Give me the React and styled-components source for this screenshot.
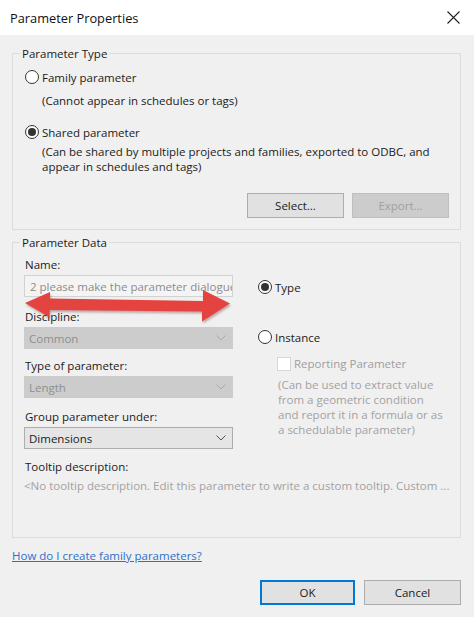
import React from "react";
import styled, { createGlobalStyle } from "styled-components";

const GlobalStyle = createGlobalStyle`
  html, body {
    margin: 0;
    padding: 0;
    background: #f0f0f0;
  }
  body {
    font-family: "Open Sans", "Noto Sans", sans-serif;
    font-size: 11.5px;
    color: #1b1b1b;
  }
  * { box-sizing: border-box; }
`;

const Window = styled.div`
  position: relative;
  width: 474px;
  height: 617px;
  background: #f0f0f0;
  display: flex;
  flex-direction: column;
  overflow: hidden;
`;

const TitleBar = styled.div`
  height: 35px;
  background: #ffffff;
  display: flex;
  align-items: center;
  justify-content: space-between;
  padding: 0 14px 0 10px;
`;

const Title = styled.div`
  font-size: 12.8px;
  color: #111;
`;

const Content = styled.div`
  display: flex;
  flex-direction: column;
  padding: 0 13px 0 12px;
`;

const GroupBox = styled.fieldset`
  margin: ${(p) => p.$mt}px 0 0 0;
  padding: 0;
  border: 1px solid #dcdcdc;
  min-width: 0;
`;

const Legend = styled.legend`
  margin-left: 7px;
  padding: 0 2px;
  line-height: 15px;
  color: #1b1b1b;
`;

const GroupInner = styled.div`
  display: flex;
  flex-direction: column;
  padding: 0 11px ${(p) => p.$pb}px 12px;
`;

const RadioRow = styled.div`
  display: flex;
  align-items: center;
  gap: 3px;
  height: 16px;
  margin-top: ${(p) => p.$mt || 0}px;
  color: ${(p) => (p.$disabled ? "#a2a2a2" : "#1b1b1b")};
`;

const Radio = styled.span`
  width: 14px;
  height: 14px;
  border-radius: 50%;
  border: 1px solid #333;
  background: #fff;
  display: flex;
  align-items: center;
  justify-content: center;
  flex: none;
  &::after {
    content: "";
    width: 8px;
    height: 8px;
    border-radius: 50%;
    background: #333;
    display: ${(p) => (p.$checked ? "block" : "none")};
  }
`;

const Note = styled.div`
  line-height: 15px;
  margin-top: ${(p) => p.$mt || 0}px;
  padding-left: ${(p) => p.$indent || 0}px;
  color: ${(p) => (p.$muted ? "#a2a2a2" : "#1b1b1b")};
  white-space: nowrap;
`;

const ButtonRow = styled.div`
  display: flex;
  justify-content: flex-end;
  gap: ${(p) => p.$gap}px;
  margin-top: ${(p) => p.$mt}px;
`;

const Button = styled.div`
  width: ${(p) => p.$w}px;
  height: 25px;
  display: flex;
  align-items: center;
  justify-content: center;
  background: ${(p) => (p.$disabled ? "#cccccc" : "#e1e1e1")};
  border: 1px solid ${(p) => (p.$default ? "#0078d7" : p.$disabled ? "#bfbfbf" : "#adadad")};
  box-shadow: ${(p) => (p.$default ? "inset 0 0 0 1px #0078d7" : "none")};
  color: ${(p) => (p.$disabled ? "#a0a0a0" : "#1b1b1b")};
`;

const DataGrid = styled.div`
  display: grid;
  grid-template-columns: 209px 1fr;
  column-gap: 25px;
  padding: 0 11px 0 11px;
`;

const Column = styled.div`
  display: flex;
  flex-direction: column;
`;

const FieldLabel = styled.div`
  line-height: 15px;
  margin-top: ${(p) => p.$mt}px;
  padding-left: ${(p) => p.$pl || 1}px;
  color: #1b1b1b;
`;

const TextBox = styled.div`
  height: 22px;
  margin-top: 3px;
  border: 1px solid #d2d2d2;
  background: #f4f4f4;
  color: #8c8c8c;
  padding: 0 5px;
  display: flex;
  align-items: center;
  white-space: nowrap;
  overflow: hidden;
`;

const Select = styled.div`
  height: 22px;
  margin-top: 3px;
  display: flex;
  align-items: center;
  justify-content: space-between;
  padding: 0 6px 0 4px;
  background: ${(p) => (p.$disabled ? "#cccccc" : "#e5e5e5")};
  border: 1px solid ${(p) => (p.$disabled ? "#cccccc" : "#adadad")};
  color: ${(p) => (p.$disabled ? "#8f8f8f" : "#1b1b1b")};
`;

const Chevron = ({ color }) => (
  <svg width="10" height="6" viewBox="0 0 10 6">
    <path d="M0.5 0.5 L5 5 L9.5 0.5" fill="none" stroke={color} strokeWidth="1" />
  </svg>
);

const RightCol = styled.div`
  display: flex;
  flex-direction: column;
  padding-top: 29px;
`;

const CheckRow = styled.div`
  display: flex;
  align-items: center;
  gap: 3px;
  margin-top: 11px;
  padding-left: 19px;
  color: #9e9e9e;
`;

const Checkbox = styled.span`
  width: 14px;
  height: 14px;
  background: #fff;
  border: 1px solid #d6d6d6;
  flex: none;
`;

const Tooltip = styled.div`
  grid-column: 1 / -1;
  display: flex;
  flex-direction: column;
  padding-bottom: 44px;
`;

const HelpLink = styled.a`
  margin-top: 10px;
  color: #2f6fcb;
  text-decoration: underline;
  line-height: 15px;
  align-self: flex-start;
`;

const ArrowOverlay = styled.svg`
  position: absolute;
  left: 22px;
  top: 288px;
  filter: drop-shadow(1px 2px 1px rgba(90, 30, 30, 0.35));
`;

export default function App() {
  return (
    <Window>
      <GlobalStyle />
      <TitleBar>
        <Title>Parameter Properties</Title>
        <svg width="13" height="13" viewBox="0 0 13 13">
          <path d="M0.5 0.5 L12.5 12.5 M12.5 0.5 L0.5 12.5" stroke="#222" strokeWidth="1.1" />
        </svg>
      </TitleBar>
      <Content>
        <GroupBox $mt={11}>
          <Legend>Parameter Type</Legend>
          <GroupInner $pb={11}>
            <RadioRow $mt={8}>
              <Radio />
              Family parameter
            </RadioRow>
            <Note $mt={8} $indent={17}>(Cannot appear in schedules or tags)</Note>
            <RadioRow $mt={16}>
              <Radio $checked />
              Shared parameter
            </RadioRow>
            <Note $mt={4} $indent={17}>
              (Can be shared by multiple projects and families, exported to ODBC, and
              <br />
              appear in schedules and tags)
            </Note>
            <ButtonRow $mt={19} $gap={8}>
              <Button $w={97}>Select...</Button>
              <Button $w={97} $disabled>Export...</Button>
            </ButtonRow>
          </GroupInner>
        </GroupBox>

        <GroupBox $mt={5}>
          <Legend>Parameter Data</Legend>
          <DataGrid>
            <Column>
              <FieldLabel $mt={7}>Name:</FieldLabel>
              <TextBox>2 please make the parameter dialogue box bigger</TextBox>
              <FieldLabel $mt={12}>Discipline:</FieldLabel>
              <Select $disabled>
                Common
                <Chevron color="#a8a8a8" />
              </Select>
              <FieldLabel $mt={9}>Type of parameter:</FieldLabel>
              <Select $disabled>
                Length
                <Chevron color="#a8a8a8" />
              </Select>
              <FieldLabel $mt={11}>Group parameter under:</FieldLabel>
              <Select>
                Dimensions
                <Chevron color="#555" />
              </Select>
            </Column>
            <RightCol>
              <RadioRow>
                <Radio $checked />
                Type
              </RadioRow>
              <RadioRow $mt={34}>
                <Radio />
                Instance
              </RadioRow>
              <CheckRow>
                <Checkbox />
                Reporting Parameter
              </CheckRow>
              <Note $mt={6} $indent={20} $muted>
                (Can be used to extract value
                <br />
                from a geometric condition
                <br />
                and report it in a formula or as
                <br />
                a schedulable parameter)
              </Note>
            </RightCol>
            <Tooltip>
              <FieldLabel $mt={10} $pl={0}>Tooltip description:</FieldLabel>
              <Note $mt={4} $muted>
                &lt;No tooltip description. Edit this parameter to write a custom tooltip. Custom ...
              </Note>
            </Tooltip>
          </DataGrid>
        </GroupBox>

        <HelpLink href="#">How do I create family parameters?</HelpLink>
        <ButtonRow $mt={17} $gap={9}>
          <Button $w={95} $default>OK</Button>
          <Button $w={97}>Cancel</Button>
        </ButtonRow>
      </Content>
      <ArrowOverlay width="212" height="38" viewBox="0 0 212 38">
        <polygon
          points="3,15 28,4 28,10.5 181,13 181,2 208,15.5 180,33.5 180,23.5 28,22 27,29"
          fill="#e5433f"
        />
      </ArrowOverlay>
    </Window>
  );
}
